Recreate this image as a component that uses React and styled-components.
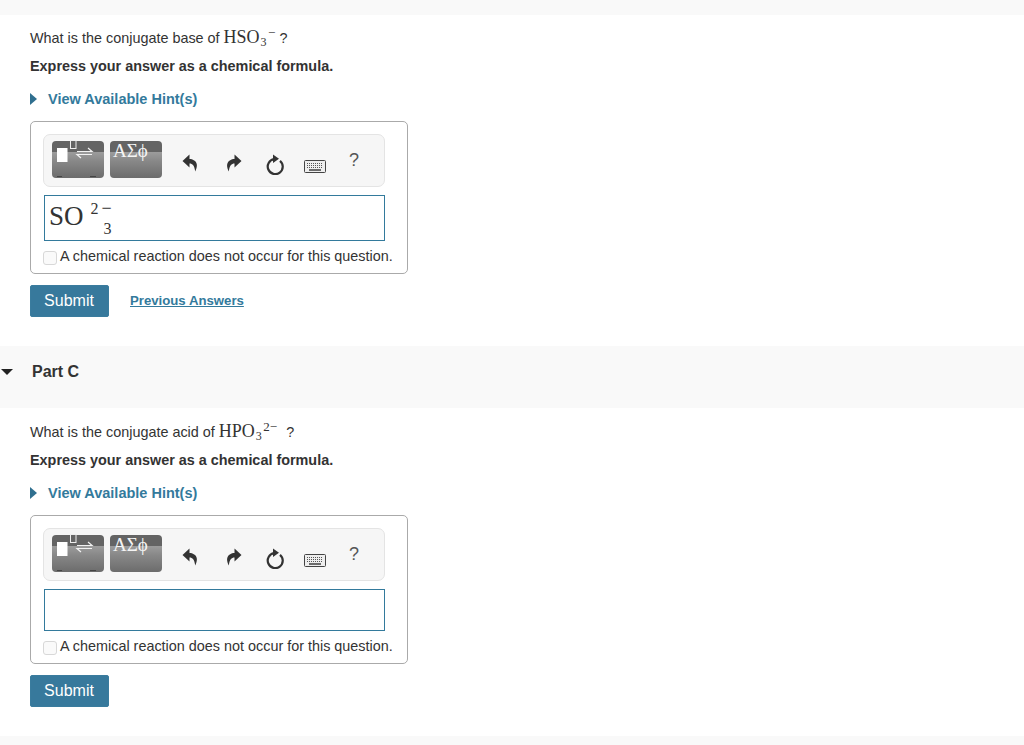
import React from "react";
import styled, { createGlobalStyle } from "styled-components";

const Global = createGlobalStyle`
  html, body { margin: 0; padding: 0; background: #fff; }
  body { font-family: "Liberation Sans", Arial, sans-serif; color: #333; }
`;
const Page = styled.div`
  width: 1024px; height: 745px; overflow: hidden; display: flex; flex-direction: column;
`;
const Band = styled.div`
  height: ${p => p.$h}px; background: #f9f9f9; flex: none;
`;
const Section = styled.section`
  padding: ${p => p.$top}px 0 0 30px; height: ${p => p.$h}px; flex: none; box-sizing: border-box;
  display: flex; flex-direction: column; align-items: flex-start;
`;
const Question = styled.div`
  font-size: 14.4px; line-height: 18px; height: 18px; color: #333; white-space: nowrap;
`;
const Formula = styled.span`
  font-family: "Liberation Serif", "Times New Roman", serif; font-size: 18px; color: #333;
`;
const Sub = styled.sub`
  font-size: 12px; line-height: 0; vertical-align: -3px; margin-left: 1px;
`;
const Sup = styled.sup`
  font-size: 13px; line-height: 0; vertical-align: 6px; margin-left: 1.5px; margin-right: ${p => p.$mr || 0}px;
`;
const Instruction = styled.div`
  margin-top: 11px; font-size: 14.4px; font-weight: bold; line-height: 18px; color: #333;
`;
const HintRow = styled.div`
  margin-top: 15px; display: flex; align-items: center; gap: 11px;
  font-size: 14.5px; font-weight: bold; line-height: 18px; color: #337a9c;
`;
const Caret = styled.span`
  width: 0; height: 0; border-left: 7px solid #2f6f8f;
  border-top: 6px solid transparent; border-bottom: 6px solid transparent;
`;
const AnswerBox = styled.div`
  margin-top: 13px; width: 378px; box-sizing: border-box; height: ${p => p.$h}px;
  border: 1px solid #aaa; border-radius: 5px; padding: 12px 22px 0 12px;
`;
const Toolbar = styled.div`
  height: 53px; box-sizing: border-box; background: #f6f6f6; border: 1px solid #e4e4e4;
  border-radius: 7px; padding: 6px 0 0 8px; display: flex; align-items: flex-start; gap: 6px;
`;
const TemplateButton = styled.div`
  position: relative; width: 52px; height: 37px; border-radius: 4px; flex: none;
  background: linear-gradient(#646464 0, #646464 11px, #9c9c9c 11px, #888 20px, #6c6c6c 100%);
  color: #f4f4f4; font-family: "Liberation Serif", serif; font-size: 19px; line-height: 20px;
  padding-left: 3px; box-sizing: border-box; white-space: nowrap;
`;
const Overlay = styled.svg`
  position: absolute; left: 0; top: -2px; overflow: visible;
`;
const Tools = styled.div`
  display: flex; height: 40px; align-items: center; color: #333;
`;
const ToolSlot = styled.div`
  width: ${p => p.$w}px; display: flex; justify-content: center; align-items: center;
  height: 40px; padding-top: ${p => p.$pt || 0}px; box-sizing: border-box;
`;
const Help = styled.span`
  font-size: 18px; color: #555; line-height: 20px; position: relative; top: -1px;
`;
const MathInput = styled.div`
  margin-top: 8px; margin-left: 1px; height: ${p => p.$h}px; box-sizing: border-box;
  border: 1px solid #337a9c; background: #fff; display: flex; align-items: flex-start;
  padding-left: 4px; font-family: "Liberation Serif", serif; color: #333;
`;
const Base = styled.span`
  font-size: 27px; line-height: 38px; margin-top: 1px;
`;
const Stack = styled.span`
  display: inline-flex; flex-direction: column; margin-left: 7px; font-size: 16px; line-height: 20px; margin-top: 2px;
`;
const Minus = styled.span`
  margin-left: 3px; font-size: 18px;
`;
const Low = styled.span`
  margin-left: 13px;
`;
const CheckRow = styled.label`
  display: flex; align-items: center; gap: 3px; margin-top: ${p => p.$mt}px; font-size: 14.4px; line-height: 18px;
  color: #333; white-space: nowrap;
`;
const Check = styled.span`
  flex: none; width: 14px; height: 14px; box-sizing: border-box; border: 1px solid #d8d8d8; border-radius: 3px; background: #fafafa;
  display: inline-block; margin-top: 3px;
`;
const Actions = styled.div`
  margin-top: ${p => p.$mt}px; display: flex; align-items: center; gap: 21px;
`;
const Submit = styled.button`
  width: 79px; height: 32px; background: #37799c; color: #fff; border: 1px solid #3a7c9e; border-radius: 2px;
  font: 16px "Liberation Sans", Arial, sans-serif; padding: 0 1px 0 0;
`;
const PrevLink = styled.a`
  font-size: 13.2px; font-weight: bold; color: #337a9c; text-decoration: underline; padding-bottom: 2px;
`;
const PartBand = styled.div`
  height: 62px; flex: none; background: #f9f9f9; display: flex; align-items: center; position: relative;
  padding-left: 32px; font-size: 16px; font-weight: bold; color: #333; padding-bottom: 11px; box-sizing: border-box;
`;
const PartCaret = styled.span`
  position: absolute; left: 1px; top: 23px; width: 0; height: 0;
  border-top: 6px solid #222; border-left: 6px solid transparent; border-right: 6px solid transparent;
`;

const TemplateIcon = () => (
  <Overlay width="52" height="37" viewBox="0 0 52 37">
    <rect x="5" y="9" width="10.5" height="14" fill="#fff" />
    <rect x="18.5" y="1.5" width="5.5" height="8" fill="none" stroke="#eee" strokeWidth="1" />
    <g stroke="#f2f2f2" strokeWidth="1.2" fill="none">
      <path d="M25 12.5h15l-4-3.5" />
      <path d="M40 15.5H25l4 3.5" />
    </g>
    <path d="M5 37.5h5M38 37.5h6" stroke="#444" strokeWidth="1" />
  </Overlay>
);
const Undo = ({ flip }) => (
  <svg width="16" height="18" viewBox="0 0 16 18" style={flip ? { transform: "scaleX(-1)" } : undefined}>
    <path d="M7.5 0.5 0.5 7 7.5 13.5V9.5c3 0 5 2 5.7 8 2-4 2.6-7.6-.2-10.4C11.4 5.6 9.5 5 7.5 5z" fill="#333" />
  </svg>
);
const Refresh = () => (
  <svg width="19" height="21" viewBox="0 0 19 21">
    <path d="M9 5.2A7.5 7.5 0 1 0 15 6.8" fill="none" stroke="#333" strokeWidth="2.2" />
    <path d="M8 0.5v8.5l6-4.2z" fill="#333" />
  </svg>
);
const Keyboard = () => (
  <svg width="22" height="13" viewBox="0 0 22 13">
    <rect x="0.5" y="0.5" width="21" height="12" rx="1" fill="#eee" stroke="#444" />
    <path d="M3 3.5h16M3 5.5h16M3 7.5h16" stroke="#555" strokeWidth="1" strokeDasharray="1 1" />
    <path d="M5 10h12" stroke="#333" strokeWidth="1.4" />
  </svg>
);

const Editor = ({ inputH, boxH, children }) => (
  <AnswerBox $h={boxH}>
    <Toolbar>
      <TemplateButton><TemplateIcon /></TemplateButton>
      <TemplateButton>ΑΣϕ</TemplateButton>
      <Tools>
        <ToolSlot $w={44} $pt={4}><Undo /></ToolSlot>
        <ToolSlot $w={44} $pt={4}><Undo flip /></ToolSlot>
        <ToolSlot $w={36} $pt={6}><Refresh /></ToolSlot>
        <ToolSlot $w={46} $pt={11}><Keyboard /></ToolSlot>
        <ToolSlot $w={32}><Help>?</Help></ToolSlot>
      </Tools>
    </Toolbar>
    <MathInput $h={inputH}>{children}</MathInput>
    <CheckRow $mt={6}><Check />A chemical reaction does not occur for this question.</CheckRow>
  </AnswerBox>
);

export default function App() {
  return (
    <Page>
      <Global />
      <Band $h={15} />
      <Section $top={13} $h={331}>
        <Question>What is the conjugate base of <Formula>HSO<Sub>3</Sub><Sup>−</Sup></Formula> ?</Question>
        <Instruction>Express your answer as a chemical formula.</Instruction>
        <HintRow><Caret />View Available Hint(s)</HintRow>
        <Editor boxH={153} inputH={46}>
          <Base>SO</Base>
          <Stack><span>2<Minus>−</Minus></span><Low>3</Low></Stack>
        </Editor>
        <Actions $mt={11}>
          <Submit>Submit</Submit>
          <PrevLink>Previous Answers</PrevLink>
        </Actions>
      </Section>
      <PartBand><PartCaret />Part C</PartBand>
      <Section $top={14} $h={328}>
        <Question>What is the conjugate acid of <Formula>HPO<Sub>3</Sub><Sup $mr={1}>2−</Sup></Formula> &nbsp;?</Question>
        <Instruction>Express your answer as a chemical formula.</Instruction>
        <HintRow><Caret />View Available Hint(s)</HintRow>
        <Editor boxH={149} inputH={42} />
        <Actions $mt={11}><Submit>Submit</Submit></Actions>
      </Section>
      <Band $h={9} />
    </Page>
  );
}
